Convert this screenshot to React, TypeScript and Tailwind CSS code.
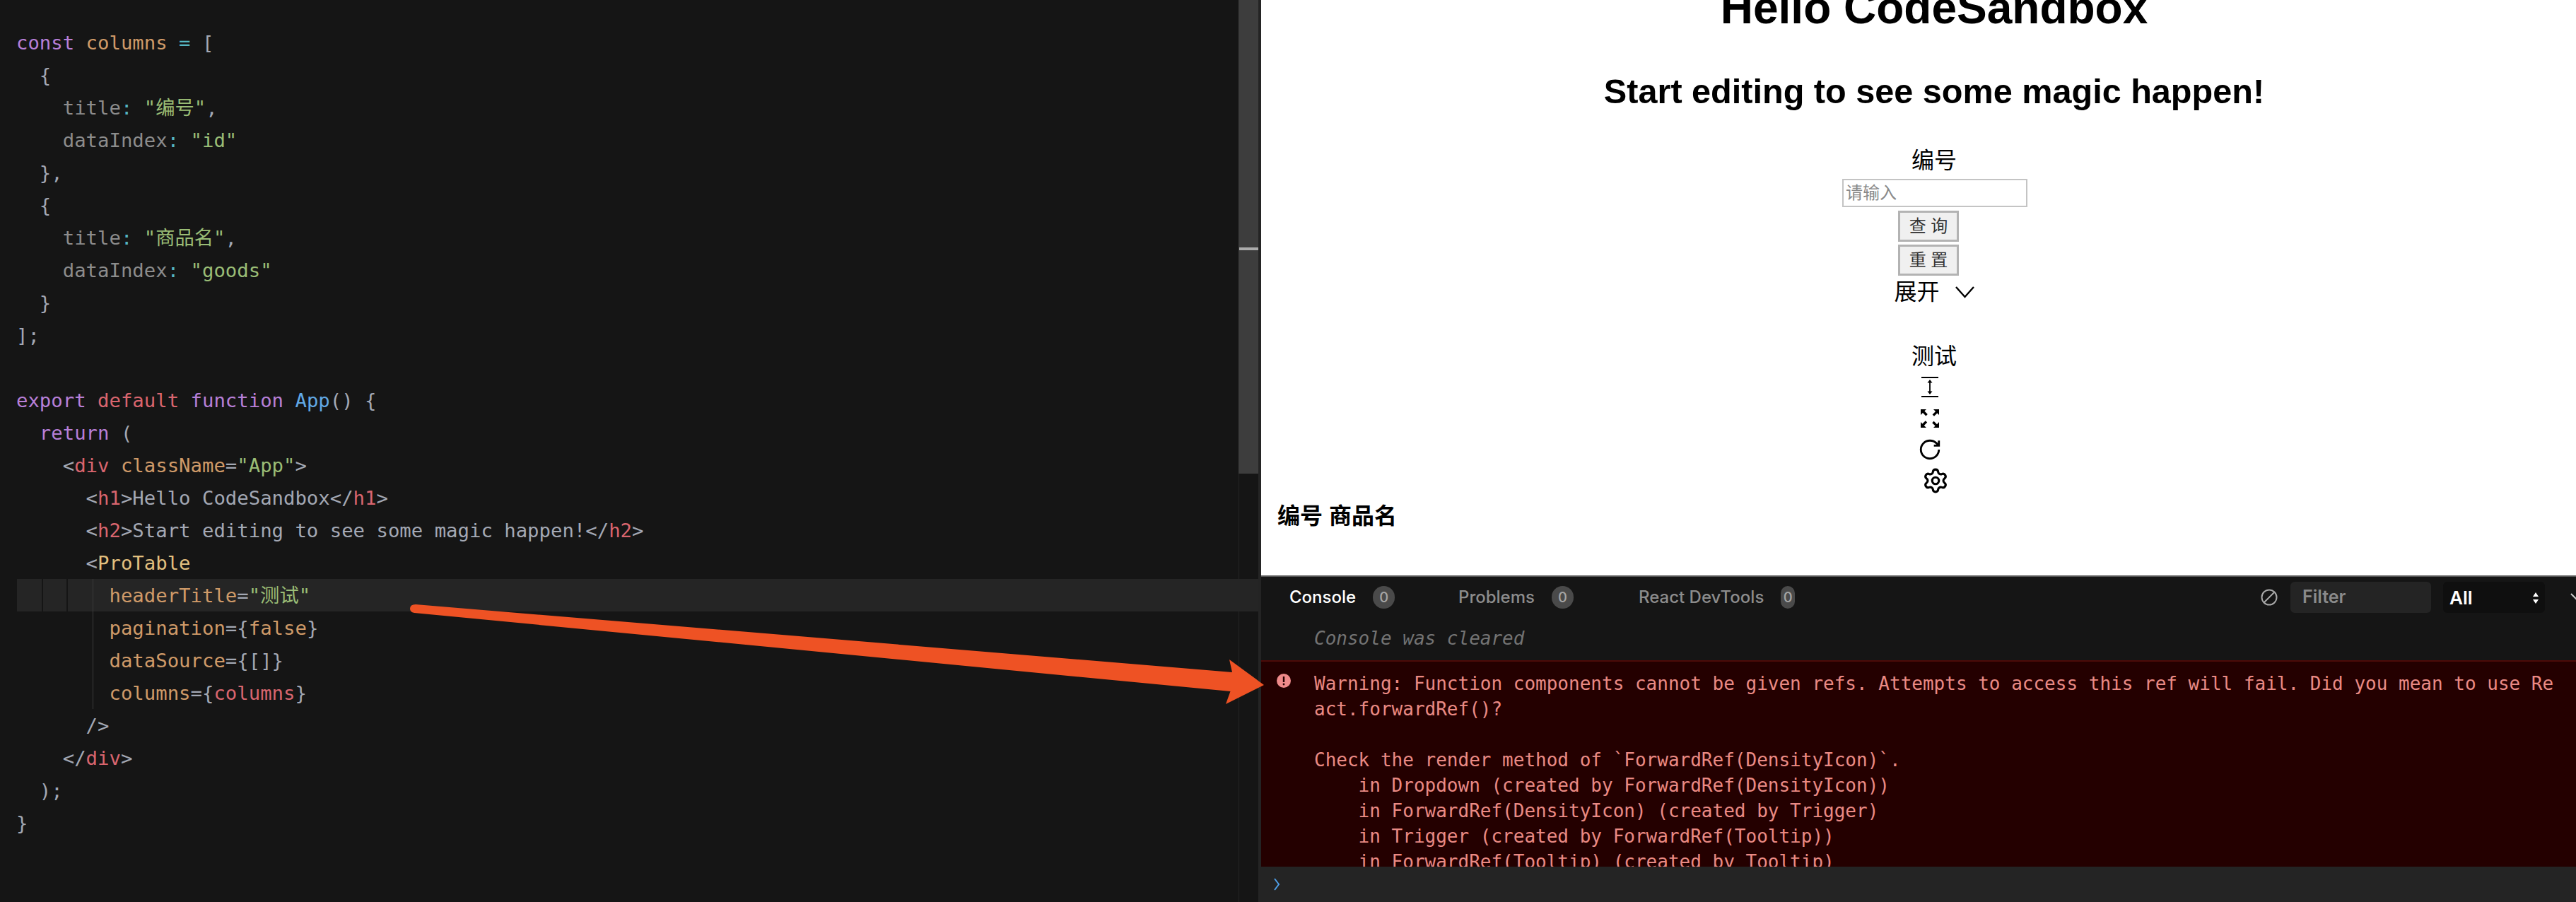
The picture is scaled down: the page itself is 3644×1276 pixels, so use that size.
import { RotateCw, Settings } from "lucide-react";

const mono = "font-['DejaVu_Sans_Mono','Noto_Sans_CJK_SC',monospace]";
const cjk = "font-['Liberation_Sans','Noto_Sans_CJK_SC',sans-serif]";

const c = {
  kw: "text-[#b77fd8]",
  orange: "text-[#cf9a68]",
  cyan: "text-[#56b6c2]",
  punc: "text-[#a3a8b4]",
  prop: "text-[#8c8c8c]",
  green: "text-[#9abd76]",
  red: "text-[#d9656e]",
  blue: "text-[#61a9e6]",
  yellow: "text-[#e3c07f]",
};

type Token = [string, string];

const codeLines: Token[][] = [
  [[c.kw, "const "], [c.orange, "columns "], [c.cyan, "= "], [c.punc, "["]],
  [[c.punc, "  {"]],
  [[c.prop, "    title"], [c.cyan, ": "], [c.green, '"编号"'], [c.punc, ","]],
  [[c.prop, "    dataIndex"], [c.cyan, ": "], [c.green, '"id"']],
  [[c.punc, "  },"]],
  [[c.punc, "  {"]],
  [[c.prop, "    title"], [c.cyan, ": "], [c.green, '"商品名"'], [c.punc, ","]],
  [[c.prop, "    dataIndex"], [c.cyan, ": "], [c.green, '"goods"']],
  [[c.punc, "  }"]],
  [[c.punc, "];"]],
  [],
  [[c.kw, "export "], [c.red, "default "], [c.kw, "function "], [c.blue, "App"], [c.punc, "() {"]],
  [[c.kw, "  return "], [c.punc, "("]],
  [[c.punc, "    <"], [c.red, "div "], [c.orange, "className"], [c.punc, "="], [c.green, '"App"'], [c.punc, ">"]],
  [[c.punc, "      <"], [c.red, "h1"], [c.punc, ">Hello CodeSandbox</"], [c.red, "h1"], [c.punc, ">"]],
  [[c.punc, "      <"], [c.red, "h2"], [c.punc, ">Start editing to see some magic happen!</"], [c.red, "h2"], [c.punc, ">"]],
  [[c.punc, "      <"], [c.yellow, "ProTable"]],
  [[c.orange, "        headerTitle"], [c.punc, "="], [c.green, '"测试"']],
  [[c.orange, "        pagination"], [c.punc, "={"], [c.orange, "false"], [c.punc, "}"]],
  [[c.orange, "        dataSource"], [c.punc, "={[]}"]],
  [[c.orange, "        columns"], [c.punc, "={"], [c.red, "columns"], [c.punc, "}"]],
  [[c.punc, "      />"]],
  [[c.punc, "    </"], [c.red, "div"], [c.punc, ">"]],
  [[c.punc, "  );"]],
  [[c.punc, "}"]],
];

const errorLines = [
  "Warning: Function components cannot be given refs. Attempts to access this ref will fail. Did you mean to use Re",
  "act.forwardRef()?",
  " ",
  "Check the render method of `ForwardRef(DensityIcon)`.",
  "    in Dropdown (created by ForwardRef(DensityIcon))",
  "    in ForwardRef(DensityIcon) (created by Trigger)",
  "    in Trigger (created by ForwardRef(Tooltip))",
  "    in ForwardRef(Tooltip) (created by Tooltip)",
];

function CodeEditor() {
  return (
    <div className={`${mono} relative w-[1780px] shrink-0 bg-[#151515] pt-[37px] text-[27.3px] leading-[46px] whitespace-pre`}>
      {/* minimap gutter + scroll slider */}
      <div className="absolute bottom-0 left-[1752px] top-0 w-[1px] bg-[#232323]" />
      <div className="absolute right-0 top-0 h-[670px] w-[28px] bg-[#3d3d3d]">
        <div className="absolute left-[1px] top-[350px] h-[4px] w-[27px] bg-[#ababab]" />
      </div>
      {codeLines.map((tokens, i) => (
        <div key={i} className={`relative h-[46px] pt-[1px] ${i === 17 ? "ml-[24px] bg-[#252525] indent-[-1px]" : "pl-[23px]"}`}>
          {i === 17 && (
            <>
              <span className="absolute left-[35px] top-0 h-full w-[2px] bg-[#151515]" />
              <span className="absolute left-[70px] top-0 h-full w-[2px] bg-[#151515]" />
            </>
          )}
          {i >= 17 && i <= 20 && (
            <span className={`absolute top-0 h-full w-[1px] bg-[#3a3a3a] ${i === 17 ? "left-[107px]" : "left-[131px]"}`} />
          )}
          {tokens.map(([color, text], j) => (
            <span key={j} className={color}>{text}</span>
          ))}
        </div>
      ))}
    </div>
  );
}

function DensityIcon() {
  return (
    <svg viewBox="0 0 24 29" className="h-[29px] w-[24px]" fill="none" stroke="#000">
      <path d="M0 1h24M0 28h24" strokeWidth="2" />
      <path d="M12 6v17" strokeWidth="1.8" />
      <path d="M12 4l3.5 4.5h-7zM12 25l3.5-4.5h-7z" fill="#000" stroke="none" />
    </svg>
  );
}

function FullscreenIcon() {
  return (
    <svg viewBox="0 0 26 26" className="h-[26px] w-[26px]" fill="#000" stroke="none">
      <path d="M0 0h8l-2.6 2.6 4.4 4.4-2.4 2.4-4.4-4.4L0 8zM26 0v8l-2.6-2.6-4.4 4.4-2.4-2.4 4.4-4.4L18 0zM0 26v-8l2.4 2.6 4.4-4.4 2.4 2.4-4.4 4.4L8 26zM26 26h-8l2.6-2.4-4.4-4.4 2.4-2.4 4.4 4.4L26 18z" />
    </svg>
  );
}

function Preview() {
  return (
    <div className="h-[816px] overflow-hidden bg-white text-black">
      <div className={`${cjk} w-[1904px] -mt-[26px] text-center`}>
        <h1 className="text-[64px] font-bold leading-[74px]">Hello CodeSandbox</h1>
        <h2 className="mt-[54px] text-[48.6px] font-bold leading-[55px]">Start editing to see some magic happen!</h2>
        <div className="mt-[52px] text-[32px] leading-[37px]">编号</div>
        <div className="mt-[7px] flex justify-center">
          <input
            readOnly
            placeholder="请输入"
            className="ml-[2px] box-border h-[40px] w-[262px] border-2 border-[#c4c4c4] bg-white px-[3px] text-[24px] outline-none placeholder:text-[#8a8a8a]"
          />
        </div>
        <div className="mt-[5px] flex flex-col items-center gap-[4px] pr-[16px]">
          <button className="h-[44px] w-[86px] border-[3px] border-[#b3b3b3] bg-[#f0f0f0] text-[24px] text-[#333]">查 询</button>
          <button className="h-[44px] w-[86px] border-[3px] border-[#b3b3b3] bg-[#f0f0f0] text-[24px] text-[#333]">重 置</button>
        </div>
        <div className="mt-[1px] flex h-[44px] items-center justify-center gap-[22px] text-[32px]">
          <span>展开</span>
          <svg viewBox="0 0 27 18" className="h-[18px] w-[27px]" fill="none" stroke="#000" strokeWidth="2.4">
            <path d="M1 2l12.5 14L26 2" />
          </svg>
        </div>
        <div className="mt-[47px] text-[32px] leading-[45px]">测试</div>
        <div className="mt-[6px] flex flex-col items-center pr-[12px]">
          <DensityIcon />
          <div className="mt-[17px]"><FullscreenIcon /></div>
          <RotateCw className="mt-[14px] h-[34px] w-[34px]" strokeWidth={2} strokeLinecap="butt" strokeLinejoin="miter" />
        </div>
        <div className="mt-[8px] flex justify-center pl-[4px]">
          <Settings className="h-[38px] w-[38px]" strokeWidth={2} />
        </div>
        <div className="mt-[9px] pl-[23px] text-left text-[32px] font-bold leading-[45px]">编号 商品名</div>
      </div>
    </div>
  );
}

function Tab({ label, active }: { label: string; active?: boolean }) {
  return (
    <div className="flex shrink-0 items-center gap-[24px] whitespace-nowrap">
      <span className={active ? "text-white" : "text-[#8c8c8c]"}>{label}</span>
      <span className="flex h-[32px] w-[31px] items-center justify-center rounded-full bg-[#4a4a4a] text-[20px] text-[#a5a5a5]">0</span>
    </div>
  );
}

function ConsolePanel() {
  return (
    <div className="flex h-[460px] flex-col bg-[#151515]">
      <div className="flex h-[58px] shrink-0 items-center pl-[40px] font-['Inter',sans-serif] text-[24px] font-medium">
        <div className="w-[239px] shrink-0"><Tab label="Console" active /></div>
        <div className="w-[255px] shrink-0"><Tab label="Problems" /></div>
        <div className="w-[221px] shrink-0"><Tab label="React DevTools" /></div>
        <svg viewBox="0 0 24 24" className="ml-[659px] h-[24px] w-[24px] shrink-0" fill="none" stroke="#a8a8a8" strokeWidth="2">
          <circle cx="12" cy="12" r="10.5" />
          <path d="M5 19L19 5" />
        </svg>
        <div className="ml-[18px] flex h-[44px] w-[199px] shrink-0 items-center rounded-[6px] bg-[#242424] pl-[17px] text-[25px] font-semibold text-[#8a8a8a]">Filter</div>
        <div className="relative ml-[17px] flex h-[44px] w-[144px] shrink-0 items-center rounded-[6px] bg-[#0f0f0f] pl-[9px] text-[26px] font-semibold text-white">
          All
          <svg viewBox="0 0 10 16" className="absolute right-[8px] top-[15px] h-[16px] w-[10px]" fill="#fff">
            <path d="M5 0l4 6H1zM5 16l-4-6h8z" />
          </svg>
        </div>
        <svg viewBox="0 0 20 12" className="ml-[36px] h-[12px] w-[20px] shrink-0" fill="none" stroke="#ccc" strokeWidth="2">
          <path d="M1 1l9 9 9-9" />
        </svg>
      </div>
      <div className={`${mono} h-[60px] shrink-0 pl-[75px] pt-[11px] text-[26px] leading-[36px] italic text-[#737373]`}>Console was cleared</div>
      <div className={`${mono} relative min-h-0 flex-1 overflow-hidden border-t-2 border-[#4d0b08] bg-[#240000] pl-[75px] pt-[13px] text-[26px] leading-[36px] whitespace-pre text-[#ea8a84]`}>
        <svg viewBox="0 0 20 20" className="absolute left-[22px] top-[17px] h-[20px] w-[20px]">
          <circle cx="10" cy="10" r="10" fill="#ee8a8a" />
          <path d="M10 4v8" stroke="#240000" strokeWidth="2.4" />
          <circle cx="10" cy="15" r="1.4" fill="#240000" />
        </svg>
        {errorLines.map((line, i) => (
          <div key={i}>{line}</div>
        ))}
      </div>
      <div className="flex h-[50px] shrink-0 items-center bg-[#242424] pl-[17px]">
        <svg viewBox="0 0 10 20" className="h-[20px] w-[10px]" fill="none" stroke="#4f9fe8" strokeWidth="2">
          <path d="M2 2l6 8-6 8" />
        </svg>
      </div>
    </div>
  );
}

export default function App() {
  return (
    <div className="relative flex h-[1276px] w-[3644px] overflow-hidden bg-[#151515]">
      <CodeEditor />
      <div className="w-[4px] shrink-0 bg-[#242424]" />
      <div className="flex min-w-0 flex-1 flex-col">
        <Preview />
        <div className="h-[2px] bg-[#555]" />
        <ConsolePanel />
      </div>
      {/* annotation arrow drawn on top of the screenshot */}
      <svg className="absolute inset-0 h-[1276px] w-[3644px]" viewBox="0 0 3644 1276">
        <path
          d="M588 855L1743 951L1739 933L1788 969L1734 996L1740.5 978L586 867Q580 866 580 861Q580 855 588 855Z"
          fill="#ee5224"
        />
      </svg>
    </div>
  );
}
